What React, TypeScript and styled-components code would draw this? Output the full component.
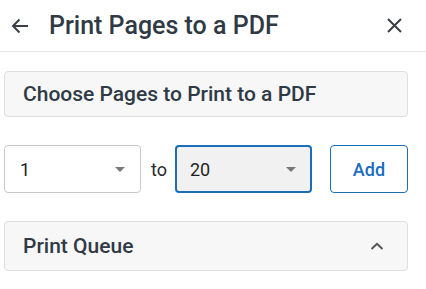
import styled, { createGlobalStyle } from 'styled-components';

const GlobalStyle = createGlobalStyle`
  html, body {
    margin: 0;
    padding: 0;
    background: #ffffff;
    font-family: Roboto, 'Liberation Sans', sans-serif;
    color: #2f3a45;
  }
`;

const Panel = styled.div`
  width: 426px;
  height: 289px;
  overflow: hidden;
  background: #fff;
`;

const Header = styled.header`
  display: flex;
  align-items: center;
  height: 52px;
  padding: 0 24px 0 11px;
  border-bottom: 1px solid #e3e3e3;
  box-sizing: border-box;
`;

const IconButton = styled.button`
  display: flex;
  align-items: center;
  justify-content: center;
  padding: 0;
  border: 0;
  background: none;
  color: #3a3f45;
  cursor: pointer;
`;

const Title = styled.h1`
  margin: 0 0 0 20px;
  font-size: 25px;
  font-weight: 500;
  color: #2f3a45;
  flex: 1;
`;

const Body = styled.main`
  display: flex;
  flex-direction: column;
  gap: 28px;
  padding: 19px 18px 0 4px;
`;

const SectionBox = styled.div<{ $tall?: boolean }>`
  display: flex;
  align-items: center;
  justify-content: space-between;
  height: ${(p) => (p.$tall ? 50 : 46)}px;
  padding: 0 23px 0 18px;
  background: #f7f7f7;
  border: 1px solid #dedede;
  border-radius: 4px;
  box-sizing: border-box;
  font-size: 21px;
  font-weight: 500;
  color: #2f3a45;
`;

const Row = styled.div`
  display: flex;
  align-items: center;
  height: 48px;
`;

const Select = styled.div<{ $focused?: boolean }>`
  display: flex;
  align-items: center;
  justify-content: space-between;
  width: 137px;
  height: 48px;
  box-sizing: border-box;
  padding: 0 ${(p) => (p.$focused ? 14 : 15)}px 0 ${(p) => (p.$focused ? 13 : 15)}px;
  border: ${(p) => (p.$focused ? '2px solid #1b6db5' : '1px solid #c9c9c9')};
  border-radius: 4px;
  background: ${(p) => (p.$focused ? '#f1f1f1' : '#fff')};
  font-size: 18px;
  color: #1f1f1f;
`;

const Caret = styled.span`
  width: 0;
  height: 0;
  border-left: 5.5px solid transparent;
  border-right: 5.5px solid transparent;
  border-top: 5px solid #787878;
`;

const ToLabel = styled.span`
  margin: 0 8px 0 10px;
  font-size: 18px;
  color: #2a2a2a;
`;

const AddButton = styled.button`
  margin-left: 18px;
  width: 78px;
  height: 48px;
  border: 1px solid #1b6db5;
  border-radius: 4px;
  background: #fff;
  color: #1b6dc0;
  font-family: Roboto, 'Liberation Sans', sans-serif;
  font-size: 18px;
  font-weight: 500;
  cursor: pointer;
`;

export default function App() {
  return (
    <Panel>
      <GlobalStyle />
      <Header>
        <IconButton aria-label="Back">
          <svg width="18" height="16" viewBox="0 0 18 16" fill="none" stroke="currentColor" strokeWidth="2">
            <path d="M17 8H2M8.5 1.5 2 8l6.5 6.5" />
          </svg>
        </IconButton>
        <Title>Print Pages to a PDF</Title>
        <IconButton aria-label="Close">
          <svg width="15" height="15" viewBox="0 0 15 15" fill="none" stroke="currentColor" strokeWidth="2">
            <path d="M1 1l13 13M14 1 1 14" />
          </svg>
        </IconButton>
      </Header>
      <Body>
        <SectionBox>Choose Pages to Print to a PDF</SectionBox>
        <Row>
          <Select>
            1<Caret />
          </Select>
          <ToLabel>to</ToLabel>
          <Select $focused>
            20<Caret />
          </Select>
          <AddButton>Add</AddButton>
        </Row>
        <SectionBox $tall>
          Print Queue
          <svg width="14" height="8" viewBox="0 0 14 8" fill="none" stroke="#555" strokeWidth="2">
            <path d="M1.5 7 7 1.8 12.5 7" />
          </svg>
        </SectionBox>
      </Body>
    </Panel>
  );
}
